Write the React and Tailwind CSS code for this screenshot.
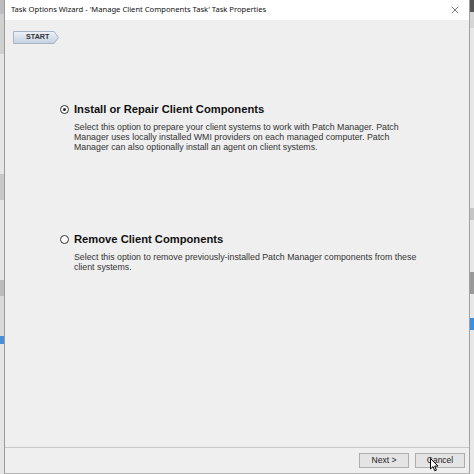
import { X } from "lucide-react";

function Radio({ checked }) {
  return (
    <span className="w-[9px] h-[9px] rounded-full border border-[#333] flex items-center justify-center bg-white shrink-0">
      {checked && <span className="w-[3px] h-[3px] rounded-full bg-[#222]" />}
    </span>
  );
}

function Option({ checked, title, children }) {
  return (
    <div className="flex flex-col">
      <div className="flex items-center gap-[5px] pl-[55px]">
        <Radio checked={checked} />
        <span className="text-[11.2px] font-bold text-[#111] leading-[16px]">{title}</span>
      </div>
      <p className="ml-[69px] w-[346px] mt-[5px] text-[8.8px] leading-[10px] text-[#333]">{children}</p>
    </div>
  );
}

export default function App() {
  return (
    <div className="w-[474px] h-[474px] flex bg-[#f0f0f0] overflow-hidden" style={{ fontFamily: "'Liberation Sans', Arial, sans-serif" }}>
      {/* background app peeking on the left */}
      <div className="w-[4px] flex flex-col bg-[#e6e6e6]">
        <div className="h-[14px] bg-[#bdbdbd]" />
        <div className="h-[40px] bg-[#d0d0d0]" />
        <div className="h-[120px]" />
        <div className="h-[26px] bg-[#c8c8c8]" />
        <div className="h-[80px]" />
        <div className="h-[16px] bg-[#bcbcbc]" />
        <div className="h-[40px] bg-[#dadada]" />
        <div className="h-[8px] bg-[#4a90d9]" />
        <div className="flex-1" />
      </div>

      {/* wizard window */}
      <div className="flex-1 flex flex-col border-l border-[#9a9a9a] border-b border-b-[#b0b0b0]">
        <div className="h-[20px] bg-white flex items-center justify-between pl-[6px] pr-[8px]">
          <span className="text-[7.6px] text-[#111]" style={{ fontFamily: "'Noto Sans', 'Open Sans', sans-serif" }}>
            Task Options Wizard - 'Manage Client Components Task' Task Properties
          </span>
          <X size={12} strokeWidth={1.2} className="text-[#222]" />
        </div>

        <div className="flex-1 flex flex-col bg-[#efefef]">
          <div className="pl-[8px] pt-[11px]">
            <div className="relative w-[46px] h-[13px]">
              <svg width="46" height="13" viewBox="0 0 46 13" className="absolute inset-0">
                <defs>
                  <linearGradient id="g" x1="0" y1="0" x2="0" y2="1">
                    <stop offset="0" stopColor="#eef2f8" />
                    <stop offset="1" stopColor="#c4d0e2" />
                  </linearGradient>
                </defs>
                <path d="M0.5 0.5 H41 L45.5 6.5 L41 12.5 H0.5 Z" fill="url(#g)" stroke="#a8b4c6" />
              </svg>
              <span className="absolute inset-0 flex items-center pl-[13px] text-[7.2px] font-bold text-[#333]">START</span>
            </div>
          </div>

          <div className="mt-[57px]">
            <Option checked title="Install or Repair Client Components">
              Select this option to prepare your client systems to work with Patch Manager. Patch Manager uses locally installed WMI providers on each managed computer. Patch Manager can also optionally install an agent on client systems.
            </Option>
          </div>
          <div className="mt-[79px]">
            <Option title="Remove Client Components">
              Select this option to remove previously-installed Patch Manager components from these client systems.
            </Option>
          </div>

          <div className="flex-1" />
          <div className="border-t border-[#c8c8c8] h-[26px] flex items-center justify-end gap-[6px] pr-[4px]">
            <button className="w-[50px] h-[15px] border border-[#adadad] bg-[#e4e4e4] text-[8.5px] text-[#222]">Next &gt;</button>
            <button className="relative w-[50px] h-[15px] border border-[#adadad] bg-[#e4e4e4] text-[8.5px] text-[#222]">
              Cancel
              <svg width="10" height="14" viewBox="0 0 10 14" className="absolute left-[14px] top-[4px]">
                <path d="M0.5 0.5 L0.5 11 L3 8.6 L4.8 12.8 L6.4 12.1 L4.7 8.1 L8 8.1 Z" fill="white" stroke="black" strokeWidth="1" />
              </svg>
            </button>
          </div>
        </div>
      </div>

      {/* background on the right */}
      <div className="w-[5px] flex flex-col bg-[#e8e8e8] border-l border-[#a0a0a0]">
        <div className="h-[12px] bg-[#555]" />
        <div className="h-[16px] bg-[#d6d6d6]" />
        <div className="h-[180px]" />
        <div className="h-[12px] bg-[#c6c6c6]" />
        <div className="h-[52px]" />
        <div className="h-[22px] bg-[#9a9a9a]" />
        <div className="h-[24px]" />
        <div className="h-[12px] bg-[#3d8fe0]" />
        <div className="flex-1" />
      </div>
    </div>
  );
}
